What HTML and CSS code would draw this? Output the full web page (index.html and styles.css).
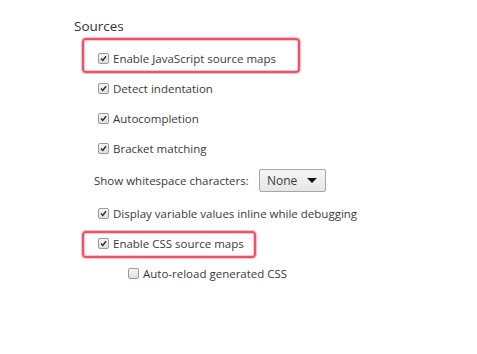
FILE: index.html
```html
<!DOCTYPE html>
<html lang="en">
<head>
    <meta charset="UTF-8">
    <meta name="viewport" content="width=device-width, initial-scale=1.0">
    <title>Settings - Sources</title>
    <link rel="stylesheet" href="styles.css">
</head>
<body>
    <div class="panel">
        <h2>Sources</h2>

        <div class="options">
            <label class="row marked marked-js">
                <span class="box checked"><svg viewBox="0 0 11 11"><path d="M2.5 5.6 L4.6 7.8 L8.6 2.8" /></svg></span>
                Enable JavaScript source maps
            </label>
            <label class="row">
                <span class="box checked"><svg viewBox="0 0 11 11"><path d="M2.5 5.6 L4.6 7.8 L8.6 2.8" /></svg></span>
                Detect indentation
            </label>
            <label class="row">
                <span class="box checked"><svg viewBox="0 0 11 11"><path d="M2.5 5.6 L4.6 7.8 L8.6 2.8" /></svg></span>
                Autocompletion
            </label>
            <label class="row">
                <span class="box checked"><svg viewBox="0 0 11 11"><path d="M2.5 5.6 L4.6 7.8 L8.6 2.8" /></svg></span>
                Bracket matching
            </label>

            <div class="row select-row">
                <span class="select-label">Show whitespace characters:</span>
                <div class="select">
                    <span>None</span>
                    <span class="arrow"></span>
                </div>
            </div>

            <label class="row">
                <span class="box checked"><svg viewBox="0 0 11 11"><path d="M2.5 5.6 L4.6 7.8 L8.6 2.8" /></svg></span>
                Display variable values inline while debugging
            </label>
            <label class="row marked marked-css">
                <span class="box checked"><svg viewBox="0 0 11 11"><path d="M2.5 5.6 L4.6 7.8 L8.6 2.8" /></svg></span>
                Enable CSS source maps
            </label>
            <label class="row sub">
                <span class="box"></span>
                Auto-reload generated CSS
            </label>
        </div>
    </div>
</body>
</html>
```

FILE: styles.css
```css
/* Global */
body {
    margin: 0;
    padding: 0;
    background: #fff;
    font-family: 'Open Sans', 'Noto Sans', sans-serif;
    color: #333;
}

.panel {
    padding: 16px 0 0 74px;
}

h2 {
    margin: 0;
    font-size: 13.5px;
    font-weight: normal;
    line-height: 20px;
    color: #333;
}

/* Option rows */
.options {
    margin-top: 7px;
    display: flex;
    flex-direction: column;
}

.row {
    position: relative;
    display: flex;
    align-items: center;
    height: 30px;
    padding-left: 24px;
    font-size: 11.5px;
    color: #3a3a3a;
    white-space: nowrap;
}

.row.sub {
    padding-left: 54px;
}

/* Checkbox */
.box {
    width: 11px;
    height: 11px;
    box-sizing: border-box;
    border: 1px solid #9a9a9a;
    border-radius: 2px;
    background: linear-gradient(#f6f6f6, #dedede);
    margin-right: 4px;
    display: flex;
}

.box svg {
    width: 100%;
    height: 100%;
}

.box svg path {
    fill: none;
    stroke: #2a2a2a;
    stroke-width: 1.7;
}

/* Select row */
.select-row {
    height: 35px;
    padding-left: 20px;
}

.select-label {
    width: 165px;
}

.select {
    width: 67px;
    height: 23px;
    box-sizing: border-box;
    border: 1px solid #a6a6a6;
    border-radius: 2px;
    background: linear-gradient(#f5f5f5, #e6e6e6);
    display: flex;
    align-items: center;
    justify-content: space-between;
    padding: 0 8px 0 7px;
    font-size: 12px;
}

.arrow {
    width: 0;
    height: 0;
    border-left: 5px solid transparent;
    border-right: 5px solid transparent;
    border-top: 5px solid #111;
}

/* Red annotation outlines */
.marked::after {
    content: "";
    position: absolute;
    left: 8px;
    border: 2px solid rgba(236, 50, 75, 0.85);
    border-radius: 4px;
    box-shadow: 0 0 1px 1px rgba(240, 100, 120, 0.45), inset 0 0 1px 1px rgba(240, 100, 120, 0.4);
    box-sizing: border-box;
}

.marked-js::after {
    top: -5px;
    width: 218px;
    height: 35px;
}

.marked-css::after {
    top: 3px;
    width: 174px;
    height: 27px;
}
```
